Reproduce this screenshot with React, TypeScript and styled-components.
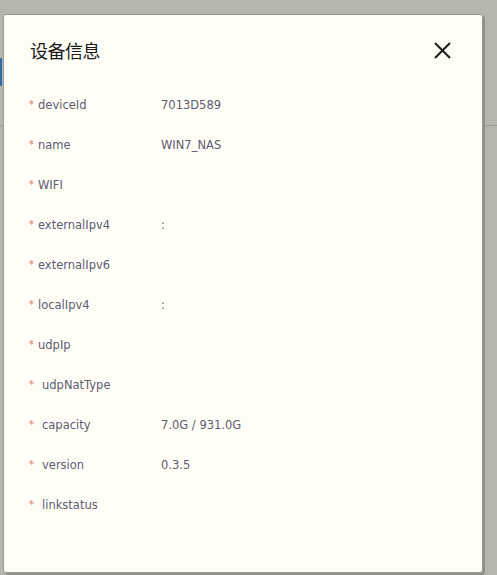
import React from "react";
import styled, { createGlobalStyle } from "styled-components";

const GlobalStyle = createGlobalStyle`
  html, body {
    margin: 0;
    padding: 0;
    background: #b4b7ad;
    font-family: "DejaVu Sans", "Noto Sans CJK SC", sans-serif;
  }
`;

const Page = styled.div`
  width: 497px;
  height: 575px;
  overflow: hidden;
  position: relative;
`;

const TopBar = styled.div`
  height: 126px;
  border-bottom: 1px solid #9a9d94;
  display: flex;
  align-items: flex-start;
  padding-top: 58px;
  box-sizing: border-box;
`;

const SearchBox = styled.div`
  width: 40px;
  height: 28px;
  margin-left: -38px;
  border: 2px solid #2f6fa8;
  box-sizing: border-box;
`;

const Modal = styled.div`
  position: absolute;
  left: 3px;
  top: 14px;
  width: 480px;
  height: 559px;
  box-sizing: border-box;
  background: #fefef6;
  border: 1px solid #979a91;
  border-radius: 3px;
  box-shadow: 2px 2px 0 #8f9289;
  display: flex;
  flex-direction: column;
`;

const Header = styled.div`
  height: 70px;
  display: flex;
  align-items: center;
  justify-content: space-between;
  padding: 0 30px 0 26px;
`;

const Title = styled.h3`
  margin: 0;
  font-family: "Noto Sans CJK SC", sans-serif;
  font-weight: 400;
  font-size: 18px;
  color: #1a1a1a;
  letter-spacing: -0.5px;
`;

const CloseButton = styled.button`
  width: 20px;
  height: 20px;
  padding: 0;
  border: none;
  background: none;
  display: flex;
  align-items: center;
  justify-content: center;
  cursor: pointer;
`;

const Body = styled.div`
  display: flex;
  flex-direction: column;
  padding: 0 0 0 25px;
`;

const Row = styled.div`
  height: 40px;
  display: flex;
  align-items: center;
  font-size: 11.5px;
  color: #5f5b72;
`;

const Label = styled.div<{ $wide?: boolean }>`
  width: 132px;
  display: flex;
  align-items: center;
  gap: ${(p) => (p.$wide ? "8px" : "4px")};
`;

const Star = styled.span`
  color: #e0707c;
  font-size: 10px;
  position: relative;
  top: -1px;
`;

const Value = styled.div`
  white-space: pre;
`;

const fields: { label: string; value?: string; wide?: boolean }[] = [
  { label: "deviceId", value: "7013D589" },
  { label: "name", value: "WIN7_NAS" },
  { label: "WIFI" },
  { label: "externalIpv4", value: ":" },
  { label: "externalIpv6" },
  { label: "localIpv4", value: ":" },
  { label: "udpIp" },
  { label: "udpNatType", wide: true },
  { label: "capacity", value: "7.0G / 931.0G", wide: true },
  { label: "version", value: "0.3.5", wide: true },
  { label: "linkstatus", wide: true },
];

export default function App() {
  return (
    <Page>
      <GlobalStyle />
      <TopBar>
        <SearchBox />
      </TopBar>
      <Modal>
        <Header>
          <Title>设备信息</Title>
          <CloseButton aria-label="close">
            <svg width="17" height="17" viewBox="0 0 17 17">
              <path d="M1 1 L16 16 M16 1 L1 16" stroke="#1c1c1c" strokeWidth="2" />
            </svg>
          </CloseButton>
        </Header>
        <Body>
          {fields.map((f) => (
            <Row key={f.label}>
              <Label $wide={f.wide}>
                <Star>*</Star>
                <span>{f.label}</span>
              </Label>
              <Value>{f.value}</Value>
            </Row>
          ))}
        </Body>
      </Modal>
    </Page>
  );
}
